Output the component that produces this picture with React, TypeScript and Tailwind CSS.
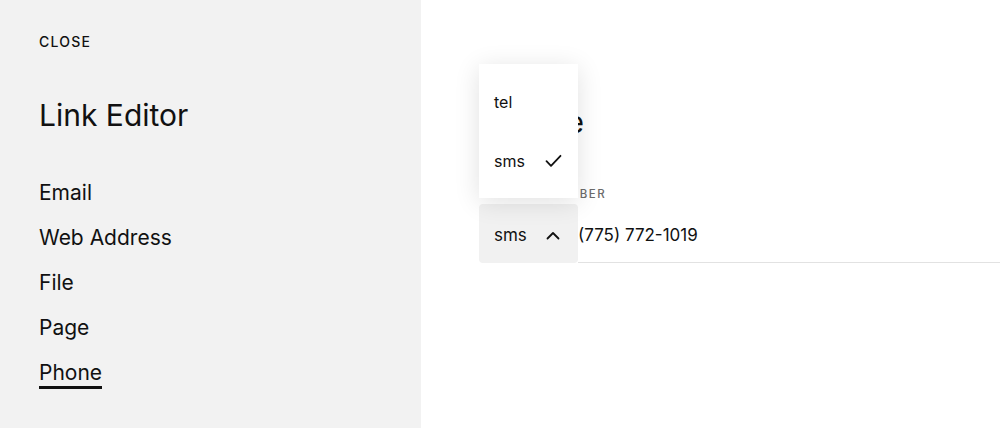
import React from 'react';

const navItems = ['Email', 'Web Address', 'File', 'Page', 'Phone'];

const CheckIcon = () => (
  <svg width="17" height="14" viewBox="0 0 17 14" fill="none">
    <path d="M1.5 7.2 L6 11.8 L15.5 1.8" stroke="#111" strokeWidth="1.8" strokeLinecap="round" strokeLinejoin="round" />
  </svg>
);

const ChevronUp = () => (
  <svg width="14" height="9" viewBox="0 0 14 9" fill="none">
    <path d="M1.5 7.5 L7 2 L12.5 7.5" stroke="#111" strokeWidth="1.8" strokeLinecap="round" strokeLinejoin="round" />
  </svg>
);

const App: React.FC = () => {
  const active = 'Phone';

  return (
    <div className="flex h-[428px] w-[1000px] overflow-hidden font-['Inter',sans-serif] text-[#111]">
      <aside className="w-[421px] shrink-0 bg-[#f2f2f2] pl-[39px] pt-[34px]">
        <div className="text-[14px] leading-4 tracking-[0.09em] font-medium">CLOSE</div>
        <h1 className="mt-[47px] text-[30px] leading-9 font-normal">Link Editor</h1>
        <nav className="mt-[48px] flex flex-col gap-[21px]">
          {navItems.map((item) => (
            <div key={item} className="h-6">
              <span
                className={
                  item === active
                    ? 'inline-block text-[21px] leading-6 pb-[1px] border-b-[3px] border-[#111]'
                    : 'inline-block text-[21px] leading-6'
                }
              >
                {item}
              </span>
            </div>
          ))}
        </nav>
      </aside>

      <main className="relative flex-1 bg-white pl-[58px] pt-[104px]">
        <h2 className="ml-[15px] text-[30px] leading-9 font-normal">Phone</h2>
        <div className="ml-[15px] mt-[47px] text-[11.5px] leading-[14px] tracking-[0.14em] text-[#6b6b6b] font-medium">
          PHONE NUMBER
        </div>
        <div className="mt-[3px] flex h-[59px] items-stretch">
          <div className="flex w-[99px] items-center justify-between rounded-[4px] bg-[#f1f1f1] pl-[15px] pr-[18px] pt-[4px]">
            <span className="text-[17px]">sms</span>
            <ChevronUp />
          </div>
          <div className="flex flex-1 items-center border-b border-[#e2e2e2] pt-[5px] text-[17px]">
            (775) 772-1019
          </div>
        </div>

        <div className="absolute left-[58px] top-[64px] h-[134px] w-[99px] bg-white pt-2 shadow-[0_4px_24px_rgba(0,0,0,0.12)]">
          <div className="flex h-[59px] items-center pl-[15px] text-[16px]">tel</div>
          <div className="flex h-[59px] items-center justify-between pl-[15px] pr-[16px] text-[16px]">
            <span>sms</span>
            <CheckIcon />
          </div>
        </div>
      </main>
    </div>
  );
};

export default App;
